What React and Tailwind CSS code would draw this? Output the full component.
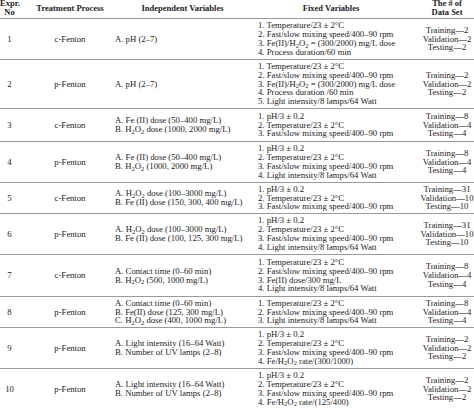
const H2O2 = () => (
  <>
    H<sub>2</sub>O<sub>2</sub>
  </>
);

const rows = [
  {
    no: "1",
    proc: "c-Fenton",
    h: "h-[41px]",
    ind: ["A. pH (2–7)"],
    fixed: [
      "1. Temperature/23 ± 2°C",
      "2. Fast/slow mixing speed/400–90 rpm",
      <>3. Fe(II)/<H2O2 /> = (300/2000) mg/L dose</>,
      "4. Process duration/60 min",
    ],
    data: ["Training—2", "Validation—2", "Testing—2"],
  },
  {
    no: "2",
    proc: "p-Fenton",
    h: "h-[49px]",
    ind: ["A. pH (2–7)"],
    fixed: [
      "1. Temperature/23 ± 2°C",
      "2. Fast/slow mixing speed/400–90 rpm",
      <>3. Fe(II)/<H2O2 /> = (300/2000) mg/L dose</>,
      "4. Process duration /60 min",
      "5. Light intensity/8 lamps/64 Watt",
    ],
    data: ["Training—2", "Validation—2", "Testing—2"],
  },
  {
    no: "3",
    proc: "c-Fenton",
    h: "h-[33px]",
    ind: ["A. Fe (II) dose (50–400 mg/L)", <>B. <H2O2 /> dose (1000, 2000 mg/L)</>],
    fixed: ["1. pH/3 ± 0.2", "2. Temperature/23 ± 2°C", "3. Fast/slow mixing speed/400–90 rpm"],
    data: ["Training—8", "Validation—4", "Testing—4"],
  },
  {
    no: "4",
    proc: "p-Fenton",
    h: "h-[41px]",
    ind: ["A. Fe (II) dose (50–400 mg/L)", <>B. <H2O2 /> (1000, 2000 mg/L)</>],
    fixed: [
      "1. pH/3 ± 0.2",
      "2. Temperature/23 ± 2°C",
      "3. Fast/slow mixing speed/400–90 rpm",
      "4. Light intensity/8 lamps/64 Watt",
    ],
    data: ["Training—8", "Validation—4", "Testing—4"],
  },
  {
    no: "5",
    proc: "c-Fenton",
    h: "h-[31px]",
    ind: [<>A. <H2O2 /> dose (100–3000 mg/L)</>, "B. Fe (II) dose (150, 300, 400 mg/L)"],
    fixed: ["1. pH/3 ± 0.2", "2. Temperature/23 ± 2°C", "3. Fast/slow mixing speed/400–90 rpm"],
    data: ["Training—31", "Validation—10", "Testing—10"],
  },
  {
    no: "6",
    proc: "p-Fenton",
    h: "h-[41px]",
    ind: [<>A. <H2O2 /> dose (100–3000 mg/L)</>, "B. Fe (II) dose (100, 125, 300 mg/L)"],
    fixed: [
      "1. pH/3 ± 0.2",
      "2. Temperature/23 ± 2°C",
      "3. Fast/slow mixing speed/400–90 rpm",
      "4. Light intensity/8 lamps/64 Watt",
    ],
    data: ["Training—31", "Validation—10", "Testing—10"],
  },
  {
    no: "7",
    proc: "c-Fenton",
    h: "h-[42px]",
    ind: ["A. Contact time (0–60 min)", <>B. <H2O2 /> (500, 1000 mg/L)</>],
    fixed: [
      "1. Temperature/23 ± 2°C",
      "2. Fast/slow mixing speed/400–90 rpm",
      "3. Fe(II) dose/300 mg/L",
      "4. Light intensity/8 lamps/64 Watt",
    ],
    data: ["Training—8", "Validation—4", "Testing—4"],
  },
  {
    no: "8",
    proc: "p-Fenton",
    h: "h-[31px]",
    ind: [
      "A. Contact time (0–60 min)",
      "B. Fe(II) dose (125, 300 mg/L)",
      <>C. <H2O2 /> dose (400, 1000 mg/L)</>,
    ],
    fixed: [
      "1. Temperature/23 ± 2°C",
      "2. Fast/slow mixing speed/400–90 rpm",
      "3. Light intensity/8 lamps/64 Watt",
    ],
    data: ["Training—8", "Validation—4", "Testing—4"],
  },
  {
    no: "9",
    proc: "p-Fenton",
    h: "h-[41px]",
    ind: ["A. Light intensity (16–64 Watt)", "B. Number of UV lamps (2–8)"],
    fixed: [
      "1. pH/3 ± 0.2",
      "2. Temperature/23 ± 2°C",
      "3. Fast/slow mixing speed/400–90 rpm",
      <>4. Fe/<H2O2 /> rate/(300/1000)</>,
    ],
    data: ["Training—2", "Validation—2", "Testing—2"],
  },
  {
    no: "10",
    proc: "p-Fenton",
    h: "h-[41px]",
    ind: ["A. Light intensity (16–64 Watt)", "B. Number of UV lamps (2–8)"],
    fixed: [
      "1. pH/3 ± 0.2",
      "2. Temperature/23 ± 2°C",
      "3. Fast/slow mixing speed/400–90 rpm",
      <>4. Fe/<H2O2 /> rate/(125/400)</>,
    ],
    data: ["Training—2", "Validation—2", "Testing—2"],
  },
];

const Lines = ({ items }) => (
  <div className="flex flex-col">
    {items.map((t, i) => (
      <div key={i} className="whitespace-nowrap">
        {t}
      </div>
    ))}
  </div>
);

export default function App() {
  return (
    <div className="w-[474px] h-[409px] overflow-hidden bg-white text-[#222] font-['Liberation_Serif',serif] text-[8.7px] leading-[8.8px]">
      <div className="w-[482px]">
        <div className="flex h-[19px] items-center pb-[2px] border-b-[1.5px] border-[#9a9a9a] font-bold text-[8.5px]">
          <div className="w-[19px] text-center">
            <div>Expr.</div>
            <div>No</div>
          </div>
          <div className="w-[96px] pl-[6px] text-center">Treatment Process</div>
          <div className="w-[135px] text-center">Independent Variables</div>
          <div className="w-[162px] text-center">Fixed Variables</div>
          <div className="w-[70px] text-center">
            <div>The # of</div>
            <div>Data Set</div>
          </div>
        </div>
        {rows.map((r) => (
          <div key={r.no} className={`flex items-center border-b-[1.5px] border-[#9a9a9a] ${r.h}`}>
            <div className="w-[19px] text-center">{r.no}</div>
            <div className="w-[96px] pl-[6px] text-center">{r.proc}</div>
            <div className="w-[135px]">
              <Lines items={r.ind} />
            </div>
            <div className="w-[162px] pl-[8px]">
              <Lines items={r.fixed} />
            </div>
            <div className="w-[70px] text-center">
              <Lines items={r.data} />
            </div>
          </div>
        ))}
      </div>
    </div>
  );
}
